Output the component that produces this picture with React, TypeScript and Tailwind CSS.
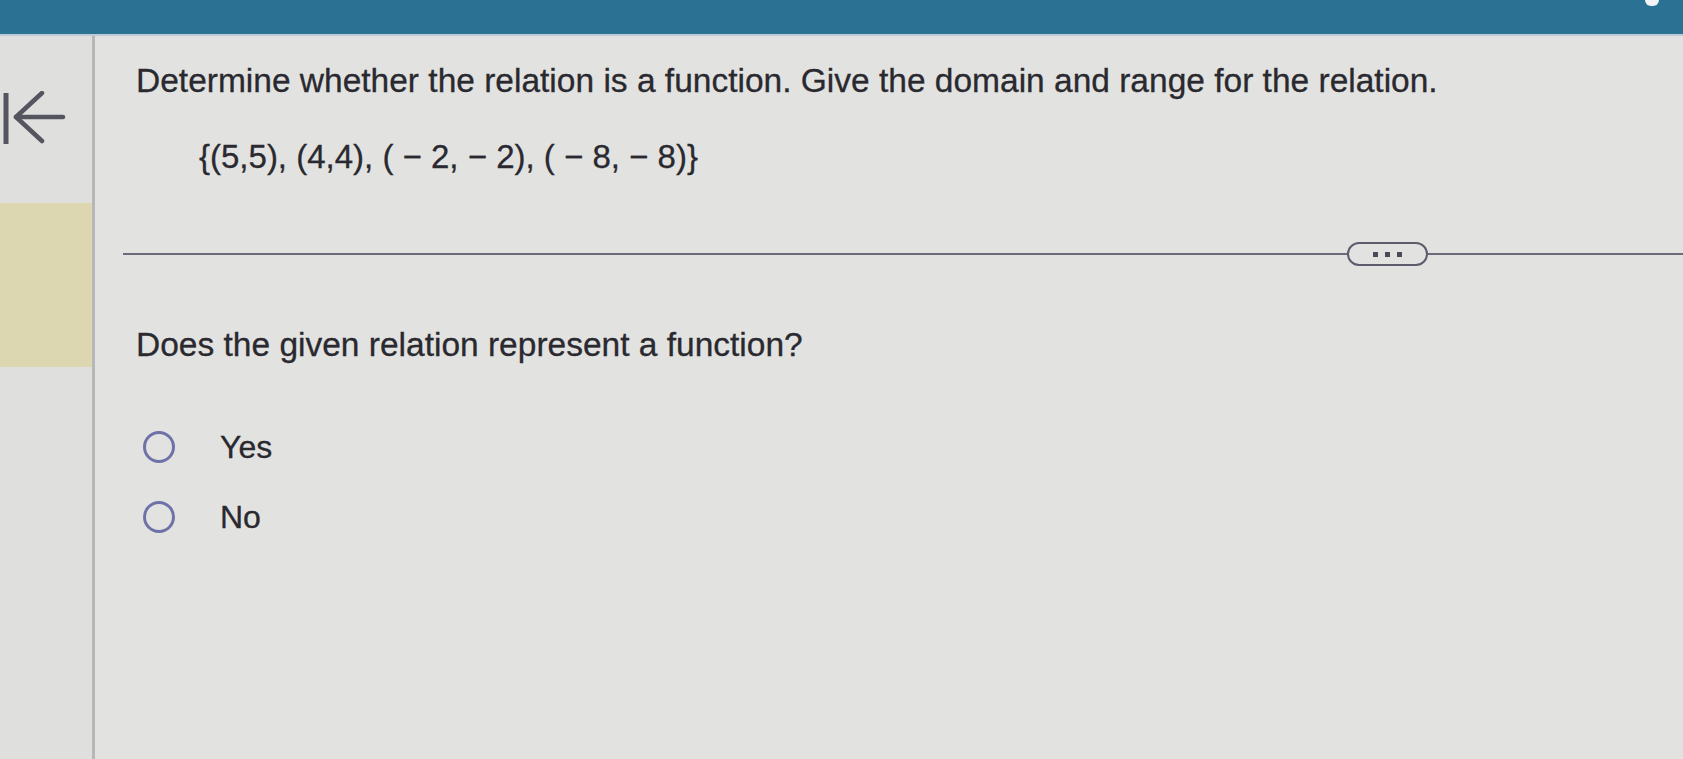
import React from "react";

export default function App() {
  return (
    <div className="h-[759px] w-full overflow-hidden bg-[#e2e2e0] font-['Liberation_Sans',Arial,sans-serif] text-[#29292f] [-webkit-text-stroke:0.3px_#29292f] flex flex-col">
      <div className="h-[36px] shrink-0 bg-[#2a7194] border-b-2 border-[#bfcbd4] flex justify-end">
        <div className="w-[14px] h-[6px] mr-[24px] rounded-b-full bg-[#f2f4f5]" />
      </div>
      <div className="flex flex-1">
        <div className="w-[95px] shrink-0 border-r-[3px] border-[#b7b7ba] bg-[#dfdfde] flex flex-col">
          <svg className="mt-[55px] ml-[2px]" width="64" height="55" viewBox="0 0 64 55" fill="none">
            <rect x="1.5" y="2" width="5" height="51" fill="#55555f" />
            <line x1="14" y1="26" x2="61" y2="26" stroke="#55555f" strokeWidth="4.5" strokeLinecap="round" />
            <polyline points="40,2 14,26 40,50" stroke="#55555f" strokeWidth="4.5" strokeLinecap="round" strokeLinejoin="round" fill="none" />
          </svg>
          <div className="mt-[57px] h-[164px] bg-[#dcd7b0]" />
        </div>
        <div className="flex-1 flex flex-col">
          <div className="pl-[41px] mt-[25px] text-[33.5px] leading-[40px]">
            Determine whether the relation is a function. Give the domain and range for the relation.
          </div>
          <div className="pl-[104px] mt-[36px] text-[33px] leading-[40px]">
            {"{(5,5), (4,4), ( − 2, − 2), ( − 8, − 8)}"}
          </div>
          <div className="ml-[28px] mt-[65px] flex items-center">
            <div className="flex-1 h-[2px] bg-[#6b6a7a]" />
            <div className="w-[81px] h-[24px] rounded-full border-[2.5px] border-[#5d5c6c] flex items-center justify-center gap-[7px]">
              <div className="w-[5px] h-[5px] bg-[#4a4a58]" />
              <div className="w-[5px] h-[5px] bg-[#4a4a58]" />
              <div className="w-[5px] h-[5px] bg-[#4a4a58]" />
            </div>
            <div className="w-[255px] h-[2px] bg-[#6b6a7a]" />
          </div>
          <div className="pl-[41px] mt-[59px] text-[33.5px] leading-[40px]">
            Does the given relation represent a function?
          </div>
          <div className="pl-[48px] mt-[64px] flex flex-col gap-[34px] text-[32px] leading-[36px]">
            <label className="flex items-center">
              <span className="w-[32px] h-[32px] rounded-full border-[3px] border-[#6f72a8]" />
              <span className="ml-[45px]">Yes</span>
            </label>
            <label className="flex items-center">
              <span className="w-[32px] h-[32px] rounded-full border-[3px] border-[#6f72a8]" />
              <span className="ml-[45px]">No</span>
            </label>
          </div>
        </div>
      </div>
    </div>
  );
}
